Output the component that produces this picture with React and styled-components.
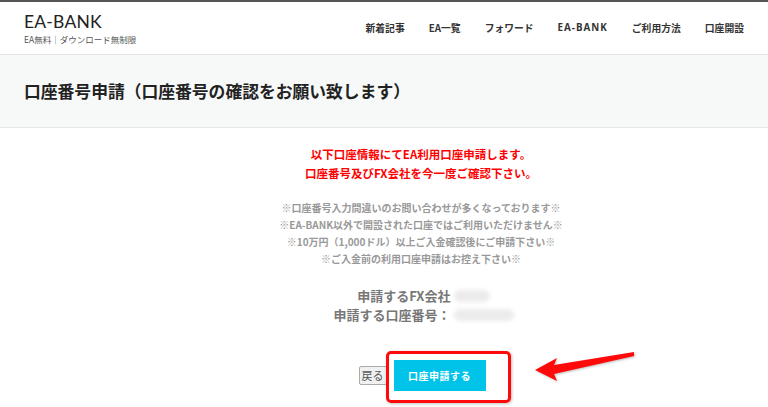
import React from "react";
import styled, { createGlobalStyle } from "styled-components";

const GlobalStyle = createGlobalStyle`
  html, body {
    margin: 0;
    padding: 0;
    background: #fff;
  }
  body {
    font-family: "Noto Sans CJK JP", "Noto Sans", sans-serif;
    overflow: hidden;
  }
`;

const Page = styled.div`
  width: 768px;
  height: 407px;
  border-top: 2px solid #555;
  box-sizing: border-box;
  overflow: hidden;
  position: relative;
`;

const Header = styled.header`
  height: 52px;
  display: flex;
  align-items: center;
  justify-content: space-between;
  padding: 0 24px;
  border-bottom: 1px solid #e4e4e4;
  box-shadow: 0 1px 2px rgba(0, 0, 0, 0.04);
`;

const Brand = styled.div`
  display: flex;
  flex-direction: column;
  margin-top: 2px;
`;

const Logo = styled.div`
  font-family: Lato, "Noto Sans", sans-serif;
  font-size: 17.5px;
  line-height: 18px;
  letter-spacing: 0.2px;
  color: #222;
`;

const Tagline = styled.div`
  font-size: 8.5px;
  line-height: 12px;
  color: #555;
  margin-top: 2px;
`;

const Nav = styled.nav`
  display: flex;
  gap: 24px;
`;

const NavItem = styled.a`
  font-size: 9.8px;
  font-weight: 700;
  color: #333;
  letter-spacing: ${(p) => (p.latin ? "1px" : "0")};
  font-family: ${(p) =>
    p.latin ? '"Open Sans", "Noto Sans CJK JP", sans-serif' : "inherit"};
`;

const TitleBand = styled.div`
  height: 72px;
  background: #f7f8f8;
  border-bottom: 1px solid #e8e8e8;
  display: flex;
  align-items: center;
  padding: 0 24px;
`;

const Title = styled.h1`
  margin: 0;
  font-size: 16.8px;
  font-weight: 700;
  color: #222;
`;

const Content = styled.main`
  padding: 17px 0 0 74px;
  display: flex;
  flex-direction: column;
  align-items: center;
  text-align: center;
`;

const Notice = styled.p`
  margin: 0;
  color: #ff0000;
  font-size: 11.5px;
  line-height: 19px;
  font-weight: 700;
`;

const Notes = styled.p`
  margin: 16px 0 0;
  color: #999;
  font-size: 10px;
  line-height: 17px;
  font-weight: 700;
`;

const Form = styled.div`
  margin: 19px 0 0 4px;
  display: grid;
  grid-template-columns: auto 62px;
  align-items: center;
`;

const Label = styled.div`
  text-align: right;
  color: #777;
  font-size: 13px;
  line-height: 19px;
  font-weight: 700;
`;

const Blurred = styled.div`
  height: 12px;
  width: ${(p) => p.w}px;
  border-radius: 6px;
  background: #ececec;
  filter: blur(2px);
  margin-left: 3px;
`;

const Actions = styled.div`
  margin: 36px 0 0 2px;
  display: flex;
  align-items: center;
  gap: 7px;
`;

const BackButton = styled.button`
  height: 19px;
  padding: 0 2px;
  border: 1px solid #aaa;
  border-radius: 2px;
  background: #f0f0f0;
  color: #555;
  font-family: inherit;
  font-size: 11px;
  line-height: 17px;
`;

const SubmitButton = styled.button`
  width: 92px;
  height: 31px;
  border: none;
  background: #00c3ea;
  color: #fff;
  font-family: inherit;
  font-size: 10px;
  font-weight: 700;
  letter-spacing: 0.5px;
`;

const Highlight = styled.div`
  position: absolute;
  left: 386px;
  top: 349px;
  width: 119px;
  height: 46px;
  border: 3px solid #ff0a0a;
  border-radius: 5px;
  box-shadow: 1px 1px 3px rgba(0, 0, 0, 0.25);
  pointer-events: none;
`;

const Arrow = styled.svg`
  position: absolute;
  left: 530px;
  top: 344px;
  filter: drop-shadow(1px 1px 1px rgba(0, 0, 0, 0.25));
`;

const navItems = [
  { label: "新着記事" },
  { label: "EA一覧" },
  { label: "フォワード" },
  { label: "EA-BANK", latin: true },
  { label: "ご利用方法" },
  { label: "口座開設" },
];

export default function App() {
  return (
    <>
      <GlobalStyle />
      <Page>
        <Header>
          <Brand>
            <Logo>EA-BANK</Logo>
            <Tagline>EA無料｜ダウンロード無制限</Tagline>
          </Brand>
          <Nav>
            {navItems.map((item) => (
              <NavItem key={item.label} latin={item.latin ? 1 : 0}>
                {item.label}
              </NavItem>
            ))}
          </Nav>
        </Header>
        <TitleBand>
          <Title>口座番号申請（口座番号の確認をお願い致します）</Title>
        </TitleBand>
        <Content>
          <Notice>
            以下口座情報にてEA利用口座申請します。
            <br />
            口座番号及びFX会社を今一度ご確認下さい。
          </Notice>
          <Notes>
            ※口座番号入力間違いのお問い合わせが多くなっております※
            <br />
            ※EA-BANK以外で開設された口座ではご利用いただけません※
            <br />
            ※10万円（1,000ドル）以上ご入金確認後にご申請下さい※
            <br />
            ※ご入金前の利用口座申請はお控え下さい※
          </Notes>
          <Form>
            <Label>申請するFX会社</Label>
            <Blurred w={36} />
            <Label>申請する口座番号：</Label>
            <Blurred w={60} />
          </Form>
          <Actions>
            <BackButton>戻る</BackButton>
            <SubmitButton>口座申請する</SubmitButton>
          </Actions>
        </Content>
        <Highlight />
        <Arrow width="110" height="42" viewBox="0 0 110 42">
          <polygon
            points="5,24 27,12 24,19 104,6 104,10 24,28 27,35"
            fill="#ff0a0a"
          />
        </Arrow>
      </Page>
    </>
  );
}
